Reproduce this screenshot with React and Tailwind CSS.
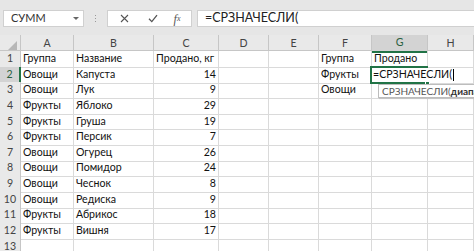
import React from "react"

const cols = ["A", "B", "C", "D", "E", "F", "G", "H"]

const rows = [
  ["Группа", "Название", "Продано, кг", "", "", "Группа", "Продано", ""],
  ["Овощи", "Капуста", 14, "", "", "Фрукты", "", ""],
  ["Овощи", "Лук", 9, "", "", "Овощи", "", ""],
  ["Фрукты", "Яблоко", 29],
  ["Фрукты", "Груша", 19],
  ["Фрукты", "Персик", 7],
  ["Овощи", "Огурец", 26],
  ["Овощи", "Помидор", 24],
  ["Овощи", "Чеснок", 8],
  ["Овощи", "Редиска", 9],
  ["Фрукты", "Абрикос", 18],
  ["Фрукты", "Вишня", 17],
  [],
]

const gridCols = "grid grid-cols-[21px_53px_80px_65px_50px_50px_53px_56px_1fr]"

export default function App() {
  return (
    <div className="relative w-[474px] h-[251px] overflow-hidden bg-white text-[10.6px] text-[#111] font-['Lato','Liberation_Sans',sans-serif]">
      {/* Formula bar */}
      <div className="h-[35px] bg-[#e6e6e6] flex items-start pt-[10px]">
        <div className="ml-[3px] w-[81px] h-[17px] bg-white border border-[#d0d0d0] flex items-center justify-between pl-[7px] pr-[4px] text-[11px] text-[#333]">
          <span>СУММ</span>
          <span className="w-0 h-0 border-l-[3px] border-r-[3px] border-t-[3px] border-l-transparent border-r-transparent border-t-[#666]" />
        </div>
        <div className="w-[23px] h-[17px] flex flex-col items-center justify-center gap-[2px]">
          <span className="w-[1px] h-[1px] bg-[#999]" />
          <span className="w-[1px] h-[1px] bg-[#999]" />
          <span className="w-[1px] h-[1px] bg-[#999]" />
        </div>
        <div className="w-[85px] h-[17px] bg-white border border-[#d0d0d0] flex items-center text-[#555]">
          <span className="w-[32px] flex justify-center">
            <svg width="9" height="9" viewBox="0 0 9 9">
              <path d="M1 1L8 8M8 1L1 8" stroke="#555" strokeWidth="1.1" />
            </svg>
          </span>
          <span className="w-[26px] flex justify-center">
            <svg width="10" height="9" viewBox="0 0 10 9">
              <path d="M1 4.8L3.8 7.6L9 1.2" stroke="#555" strokeWidth="1.3" fill="none" />
            </svg>
          </span>
          <span className="w-[22px] flex justify-center italic font-['Liberation_Serif',serif] text-[12px] text-[#555]">
            f<span className="text-[8px] mt-[3px]">x</span>
          </span>
        </div>
        <div className="ml-[5px] flex-1 h-[17px] bg-white border border-[#d0d0d0] border-r-0 flex items-center pl-[7px] text-[12.5px] text-[#222]">
          =СРЗНАЧЕСЛИ(
        </div>
      </div>

      {/* Column headers */}
      <div className={`${gridCols} h-[16px] bg-[#e9e9e9] text-[#444] border-b border-[#c6c6c6]`}>
        <div className="relative border-r border-[#c6c6c6]">
          <svg className="absolute right-[3px] bottom-[3px]" width="9" height="9" viewBox="0 0 9 9">
            <path d="M9 0L9 9L0 9Z" fill="#b7b7b7" />
          </svg>
        </div>
        {cols.map((c) => (
          <div
            key={c}
            className={
              c === "G"
                ? "flex items-center justify-center bg-[#d3d3d3] text-[#2b5f3f] border-r border-[#c6c6c6] border-b-2 border-b-[#217346]"
                : "flex items-center justify-center border-r border-[#c6c6c6]"
            }
          >
            {c}
          </div>
        ))}
      </div>

      {/* Rows */}
      {rows.map((r, i) => (
        <div key={i} className={`${gridCols} h-[15.65px]`}>
          <div
            className={
              i === 1
                ? "flex items-center justify-center bg-[#d3d3d3] text-[#2b5f3f] border-r-2 border-[#217346] border-b border-b-[#c6c6c6]"
                : "flex items-center justify-center bg-[#e9e9e9] text-[#444] border-r border-b border-[#c6c6c6]"
            }
          >
            {i + 1}
          </div>
          {cols.map((c, j) => {
            const v = r[j]
            const num = typeof v === "number"
            return (
              <div
                key={c}
                className={`flex items-center overflow-visible whitespace-nowrap border-r border-b border-[#dadada] ${
                  num ? "justify-end pr-[2px]" : "pl-[2px]"
                }`}
              >
                {v}
              </div>
            )
          })}
        </div>
      ))}

      {/* Active cell G2 in edit mode */}
      <div className="absolute left-[370px] top-[65.6px] w-[58px] h-[18px] border-2 border-[#217346]" />
      <div className="absolute left-[372px] top-[67.6px] h-[14px] bg-white flex items-center pl-[1px] pr-[1px] text-[#111] whitespace-nowrap">
        =СРЗНАЧЕСЛИ(
        <span className="ml-[1px] w-[1px] h-[12px] bg-black" />
      </div>
      <div className="absolute left-[425px] top-[81px] w-[5px] h-[5px] bg-[#217346] border border-white" />

      {/* Function tooltip */}
      <div className="absolute left-[378px] top-[84px] h-[14px] bg-white border border-[#bdbdbd] flex items-center px-[3px] whitespace-nowrap text-[10px] text-[#555] shadow-[1px_1px_1px_rgba(0,0,0,0.1)]">
        СРЗНАЧЕСЛИ(<b className="text-[#333]">диапазон</b>; условие; [диапазон_усреднения])
      </div>
    </div>
  )
}
